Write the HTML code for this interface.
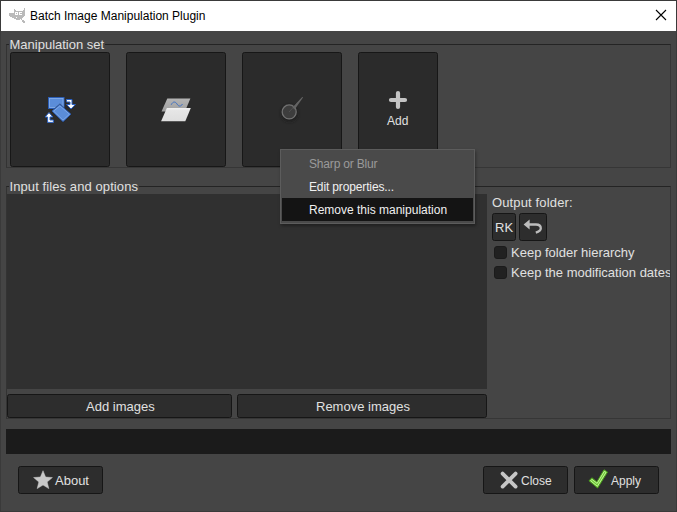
<!DOCTYPE html>
<html><head><meta charset="utf-8">
<style>
*{box-sizing:border-box;margin:0;padding:0}
html,body{width:677px;height:512px;overflow:hidden;background:#454545;font-family:"Liberation Sans",sans-serif;}
.a{position:absolute}
#win{left:0;top:0;width:677px;height:512px;border:1px solid #3a3a3a;}
#title{left:1px;top:1px;width:675px;height:30px;background:#fff;}
.t{position:absolute;white-space:nowrap;line-height:1;}
.frame{position:absolute;border:1px solid #363636;border-top-color:#242424;border-left-color:#333;border-radius:0;}
.tile{position:absolute;background:#2b2b2b;border:1px solid #171717;border-radius:2.5px;}
.btn{position:absolute;background:#2d2d2d;border:1px solid #161616;border-radius:2.5px;}
.lbl{color:#e0e0e0;font-size:13px;}
.cb{position:absolute;width:13px;height:13px;background:#212121;border:1px solid #1b1b1b;border-radius:3px;}
</style></head><body>
<div id="win" class="a"></div>
<div id="title" class="a"></div>
<!-- gimp icon -->
<svg class="a" style="left:0;top:0" width="30" height="30" viewBox="0 0 30 30" shape-rendering="crispEdges"><g fill="#bababa"><rect x="24" y="8" width="1" height="1"/><rect x="14" y="9" width="1" height="1"/><rect x="24" y="9" width="1" height="1"/><rect x="14" y="10" width="2" height="1"/><rect x="23" y="10" width="2" height="1"/><rect x="14" y="11" width="11" height="1"/><rect x="14" y="12" width="11" height="1"/><rect x="9" y="13" width="16" height="1"/><rect x="9" y="14" width="16" height="1"/><rect x="9" y="15" width="16" height="1"/><rect x="10" y="16" width="14" height="1"/><rect x="12" y="17" width="4" height="1"/><rect x="17" y="17" width="6" height="1"/><rect x="14" y="18" width="6" height="1"/><rect x="20" y="18" width="2" height="1"/><rect x="16" y="19" width="4" height="1"/><rect x="21" y="19" width="1" height="1"/><rect x="22" y="20" width="2" height="1"/><rect x="22" y="21" width="3" height="1"/><rect x="23" y="22" width="2" height="1"/></g><rect x="15" y="12" width="3" height="3" fill="#fff"/><rect x="19" y="12" width="3" height="3" fill="#fff"/><rect x="16" y="13" width="1" height="1" fill="#bababa"/><rect x="20" y="13" width="2" height="1" fill="#bababa"/></svg>
<div class="t" style="left:30px;top:10px;font-size:12px;color:#000">Batch Image Manipulation Plugin</div>
<svg class="a" style="left:655px;top:9px" width="12" height="12" viewBox="0 0 12 12"><path d="M1 1L11 11M11 1L1 11" stroke="#000" stroke-width="1.1"/></svg>

<!-- group 1 -->
<div class="frame" style="left:6px;top:44px;width:665px;height:124px;"></div>
<div class="t lbl" style="left:8.5px;top:38px;background:#454545;padding:0 1px;">Manipulation set</div>
<div class="tile" style="left:10px;top:52px;width:100px;height:115px;"></div>
<div class="tile" style="left:126px;top:52px;width:100px;height:115px;"></div>
<div class="tile" style="left:242px;top:52px;width:100px;height:115px;"></div>
<div class="tile" style="left:358px;top:52px;width:80px;height:115px;"></div>

<!-- tile icons -->
<svg class="a" style="left:40px;top:90px" width="40" height="40" viewBox="0 0 40 40">
<rect x="8.5" y="7.5" width="15.5" height="11" fill="#5b8dd9" stroke="#2b5db5"/>
<rect x="9.5" y="8.5" width="13.5" height="9" fill="none" stroke="#86aeea" stroke-width="0.8"/>
<path d="M11.2 21.1 L19.9 13.6 L31.8 24.2 L23 32.4 Z" fill="#262626" opacity="0.6"/>
<path d="M12.1 21.1 L19.9 14.5 L30.9 24.2 L23 31.6 Z" fill="#5b8dd9" stroke="#2b5db5"/>
<path d="M13.6 21.1 L19.9 15.9 L29.5 24.2 L23 30.2 Z" fill="none" stroke="#86aeea" stroke-width="0.8"/>
<path d="M26.5 9.5 H32 V14.5 H35.4 L31 19 L26.6 14.5 H30 V12 H26.5 Z" fill="#fff" stroke="#2b62c4" stroke-width="1"/>
<path d="M9 22.6 L12.9 27 H10 V30 H13.4 V32.4 H7.6 V27 H5 Z" fill="#fff" stroke="#2b62c4" stroke-width="1"/>
</svg>
<svg class="a" style="left:156px;top:90px" width="40" height="40" viewBox="0 0 40 40">
<defs><linearGradient id="g2a" x1="0" y1="0" x2="0" y2="1"><stop offset="0" stop-color="#b4b4b4"/><stop offset="1" stop-color="#a0a0a0"/></linearGradient>
<linearGradient id="g2b" x1="0" y1="0" x2="0" y2="1"><stop offset="0" stop-color="#f2f2f2"/><stop offset="0.2" stop-color="#e6e6e6"/><stop offset="1" stop-color="#dedede"/></linearGradient></defs>
<path d="M11.3 8.6 L34.4 8.6 L28.9 21.5 L5.5 21.5 Z" fill="url(#g2a)"/>
<path d="M10.9 18 L34.8 18 L29.3 31.3 L5.1 31.3 Z" fill="url(#g2b)"/>
<path d="M15.2 14.8 C17 11 19.5 11.5 21 14 C22.5 16.5 24.8 17 26.5 14" fill="none" stroke="#4272c4" stroke-width="1"/>
</svg>
<svg class="a" style="left:272px;top:90px" width="40" height="40" viewBox="0 0 40 40">
<defs><filter id="bl3" x="-50%" y="-50%" width="200%" height="200%"><feGaussianBlur stdDeviation="0.45"/></filter>
<filter id="sh3" x="-50%" y="-50%" width="200%" height="200%"><feGaussianBlur stdDeviation="1.6"/></filter></defs>
<circle cx="17.5" cy="23.5" r="8.5" fill="#1a1a1a" opacity="0.7" filter="url(#sh3)"/>
<g filter="url(#bl3)">
<circle cx="17.2" cy="21.9" r="7" fill="#3d3d3d" stroke="#727272" stroke-width="1.3"/>
<path d="M17 22 L30.5 7.5" stroke="#505050" stroke-width="1"/>
<path d="M20.6 17.6 L22.6 19.4 L31 7.6 L30.2 7 Z" fill="#646464"/>
</g>
</svg>
<svg class="a" style="left:388px;top:90px" width="20" height="20" viewBox="0 0 20 20">
<path d="M10 3V17M3 10H17" stroke="#c4c4c4" stroke-width="4.2" stroke-linecap="round"/>
</svg>
<div class="t" style="left:387px;top:115px;font-size:12px;color:#e0e0e0">Add</div>

<!-- group 2 -->
<div class="frame" style="left:6px;top:186px;width:665px;height:233px;"></div>
<div class="t lbl" style="left:8.5px;top:180px;background:#454545;padding:0 1px;letter-spacing:0.09px;">Input files and options</div>
<div class="a" style="left:7px;top:194px;width:480px;height:195px;background:#303030;"></div>
<div class="btn" style="left:7px;top:394px;width:225px;height:24px;"></div>
<div class="t lbl" style="left:86px;top:400px;">Add images</div>
<div class="btn" style="left:237px;top:394px;width:250px;height:24px;"></div>
<div class="t lbl" style="left:316px;top:400px;">Remove images</div>

<div class="t lbl" style="left:492px;top:196px;letter-spacing:0.14px;">Output folder:</div>
<div class="btn" style="left:492px;top:213px;width:24px;height:28px;"></div>
<div class="t lbl" style="left:495px;top:221px;">RK</div>
<div class="btn" style="left:519px;top:213px;width:28px;height:28px;"></div>
<svg class="a" style="left:519px;top:213px" width="28" height="28" viewBox="0 0 28 28">
<path d="M4.6 11.5 L10.6 6.5 L10.6 16.5 Z" fill="#bcbcbc"/>
<path d="M10 11.5 H17 C20.5 11.5 21.8 13.5 21.8 15.2 C21.8 17 20 18.6 16.8 19.6" fill="none" stroke="#bcbcbc" stroke-width="2.3"/>
</svg>
<div class="cb" style="left:494px;top:246px;"></div>
<div class="t lbl" style="left:511px;top:246px;">Keep folder hierarchy</div>
<div class="cb" style="left:494px;top:266px;"></div>
<div class="a" style="left:511px;top:262px;width:159px;height:20px;overflow:hidden;"><div class="t lbl" style="left:0;top:4px;">Keep the modification dates</div></div>

<!-- progress -->
<div class="a" style="left:6px;top:429px;width:665px;height:25px;background:#1b1b1b;"></div>

<!-- bottom buttons -->
<div class="btn" style="left:18px;top:466px;width:85px;height:28px;"></div>
<svg class="a" style="left:33px;top:470px" width="20" height="20" viewBox="0 0 20 20">
<path d="M10.00 0.70 L12.59 7.04 L19.42 7.54 L14.18 11.96 L15.82 18.61 L10.00 15.00 L4.18 18.61 L5.82 11.96 L0.58 7.54 L7.41 7.04 Z" fill="#c8c8c8" stroke="#c8c8c8" stroke-width="0.5" stroke-linejoin="round"/>
</svg>
<div class="t" style="left:55px;top:474px;font-size:13px;color:#e0e0e0">About</div>

<div class="btn" style="left:483px;top:466px;width:85px;height:28px;"></div>
<svg class="a" style="left:499px;top:470px" width="20" height="20" viewBox="0 0 20 20">
<path d="M3.6 3.6 L16.6 16.6 M16.6 3.6 L3.6 16.6" stroke="#c6c6c6" stroke-width="3.8" stroke-linecap="round"/>
</svg>
<div class="t" style="left:521px;top:475px;font-size:12px;color:#e0e0e0">Close</div>

<div class="btn" style="left:574px;top:466px;width:85px;height:28px;"></div>
<svg class="a" style="left:586px;top:467px" width="24" height="24" viewBox="0 0 24 24">
<path d="M5.9 10.8 L3 13.8 L11.6 21 L21.5 5.1 L18 2.8 L10.9 15 Z" fill="#70cc38" stroke="#4a9c1c" stroke-width="1" stroke-linejoin="round"/>
<path d="M5.9 12.3 L4.6 13.8 L11.4 19.3 L20 5.4 L18.3 4.3 L11.1 16.4 Z" fill="none" stroke="#c8f4a0" stroke-width="0.9" stroke-linejoin="round"/>
</svg>
<div class="t" style="left:611px;top:475px;font-size:12px;color:#e0e0e0">Apply</div>

<!-- context menu -->
<div class="a" style="left:280px;top:149px;width:195px;height:75px;background:#4a4a4a;border:1px solid #5c5c5c;box-shadow:1px 2px 3px rgba(0,0,0,0.35);"></div>
<div class="a" style="left:282px;top:198px;width:191px;height:23px;background:#141414;"></div>
<div class="t" style="left:309px;top:158px;font-size:12px;color:#9a9a9a;letter-spacing:-0.18px">Sharp or Blur</div>
<div class="t" style="left:309px;top:181px;font-size:12px;color:#f0f0f0;letter-spacing:-0.14px">Edit properties...</div>
<div class="t" style="left:309px;top:204px;font-size:12px;color:#f0f0f0">Remove this manipulation</div>
</body></html>
